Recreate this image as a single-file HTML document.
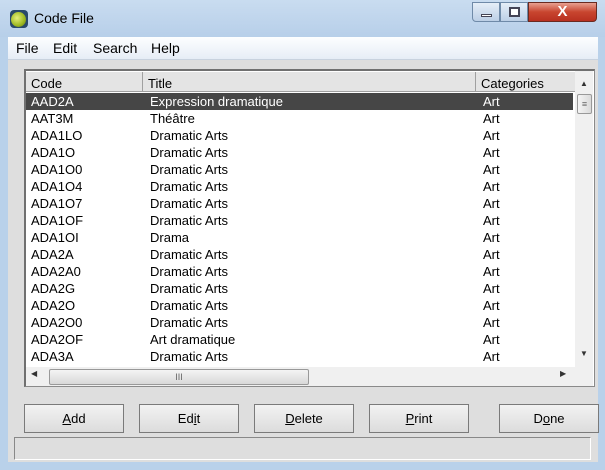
<!DOCTYPE html><html><head><style>
*{margin:0;padding:0;box-sizing:border-box}
body{width:605px;height:470px;overflow:hidden;background:#b9d1ea;font-family:"Liberation Sans",sans-serif;font-size:13px;position:relative}
.abs{position:absolute}
.title{left:0;top:0;width:605px;height:37px;background:linear-gradient(#c9dcf0,#b7cfe9)}
.client{left:8px;top:37px;width:590px;height:425px;background:#dedede}
.menu{left:8px;top:37px;width:590px;height:23px;background:linear-gradient(#fdfeff,#e6edf6);border-bottom:1px solid #c8d2de;font-size:14px}
.menu span{position:absolute;top:3px}
.list{left:24px;top:69px;width:571px;height:318px;border:1px solid #8a8a8a;border-top:2px solid #707070;border-left:2px solid #707070;background:#fff;overflow:hidden}
.hdr{position:absolute;top:1px;height:20px;background:#e4e4e4;border-right:1px solid #a0a0a0;border-bottom:1px solid #a0a0a0;padding:4px 0 0 5px}
.row{position:absolute;left:0;width:547px;height:17px;line-height:18px}
.row span{position:absolute}
.sel{background:#464646;color:#fff}
.btn{top:404px;height:29px;width:100px;background:linear-gradient(#f2f2f2,#dcdcdc);border:1px solid #7a7a7a;text-align:center;line-height:27px;font-size:13px}
u{text-decoration:underline}
</style></head><body>
<div class="abs title"></div>
<div class="abs" style="left:10px;top:10px;width:18px;height:18px;border-radius:4px;background:#2a4a6a"></div>
<div class="abs" style="left:11px;top:12px;width:15px;height:15px;border-radius:50%;background:radial-gradient(circle at 40% 40%,#e6f07a,#9cb820 60%,#5a7010)"></div>
<div class="abs" style="left:34px;top:10px;font-size:14px;color:#000">Code File</div>
<div class="abs" style="left:472px;top:2px;width:28px;height:20px;border:1px solid #6f8aa8;border-radius:0 0 0 4px;background:linear-gradient(#e5eef8,#bccfe6)"><div class="abs" style="left:8px;top:11px;width:11px;height:3px;background:#fff;border:1px solid #445"></div></div>
<div class="abs" style="left:500px;top:2px;width:28px;height:20px;border:1px solid #6f8aa8;background:linear-gradient(#e5eef8,#bccfe6)"><div class="abs" style="left:8px;top:4px;width:11px;height:10px;border:2px solid #445;background:#fff"></div></div>
<div class="abs" style="left:528px;top:2px;width:69px;height:20px;border:1px solid #6a2a20;border-radius:0 0 4px 0;background:linear-gradient(#e8a090,#c8452f 50%,#b83020);color:#fff;font-weight:bold;text-align:center;font-size:15px;line-height:18px">X</div>
<div class="abs client"></div>
<div class="abs menu"><span style="left:8px">File</span><span style="left:45px">Edit</span><span style="left:85px">Search</span><span style="left:143px">Help</span></div>
<div class="abs list">
<div class="hdr" style="left:0;width:117px">Code</div>
<div class="hdr" style="left:117px;width:333px">Title</div>
<div class="hdr" style="left:450px;width:100px">Categories</div>
<div id="rows"></div>
<div class="abs" style="left:549px;top:0;width:18px;height:296px;background:#f0f0f0"></div>
<div class="abs" style="left:554px;top:8px;font-size:8px;color:#333">▲</div>
<div class="abs" style="left:551px;top:23px;width:15px;height:20px;border:1px solid #999;border-radius:2px;background:linear-gradient(90deg,#f4f4f4,#dadada);font-size:9px;text-align:center;line-height:18px;color:#666">≡</div>
<div class="abs" style="left:554px;top:278px;font-size:8px;color:#333">▼</div>
<div class="abs" style="left:0;top:296px;width:567px;height:20px;background:#f0f0f0"></div>
<div class="abs" style="left:5px;top:298px;font-size:8px;color:#333">◀</div>
<div class="abs" style="left:23px;top:298px;width:260px;height:16px;border:1px solid #999;border-radius:2px;background:linear-gradient(#f4f4f4,#d8d8d8);text-align:center;font-size:9px;line-height:14px;color:#666">III</div>
<div class="abs" style="left:534px;top:298px;font-size:8px;color:#333">▶</div>
</div>
<div class="abs btn" style="left:24px"><u>A</u>dd</div>
<div class="abs btn" style="left:139px">Ed<u>i</u>t</div>
<div class="abs btn" style="left:254px"><u>D</u>elete</div>
<div class="abs btn" style="left:369px"><u>P</u>rint</div>
<div class="abs btn" style="left:499px">D<u>o</u>ne</div>
<div class="abs" style="left:14px;top:437px;width:577px;height:23px;border:1px solid #888;border-right-color:#fff;border-bottom-color:#fff;background:#dedede"></div>
<script>
var d=[["AAD2A","Expression dramatique"],["AAT3M","Théâtre"],["ADA1LO","Dramatic Arts"],["ADA1O","Dramatic Arts"],["ADA1O0","Dramatic Arts"],["ADA1O4","Dramatic Arts"],["ADA1O7","Dramatic Arts"],["ADA1OF","Dramatic Arts"],["ADA1OI","Drama"],["ADA2A","Dramatic Arts"],["ADA2A0","Dramatic Arts"],["ADA2G","Dramatic Arts"],["ADA2O","Dramatic Arts"],["ADA2O0","Dramatic Arts"],["ADA2OF","Art dramatique"],["ADA3A","Dramatic Arts"]];
var h="";d.forEach(function(r,i){h+='<div class="row'+(i==0?' sel':'')+'" style="top:'+(22+i*17)+'px"><span style="left:5px">'+r[0]+'</span><span style="left:124px">'+r[1]+'</span><span style="left:457px">Art</span></div>'});
document.getElementById("rows").innerHTML=h;
</script>
</body></html>
